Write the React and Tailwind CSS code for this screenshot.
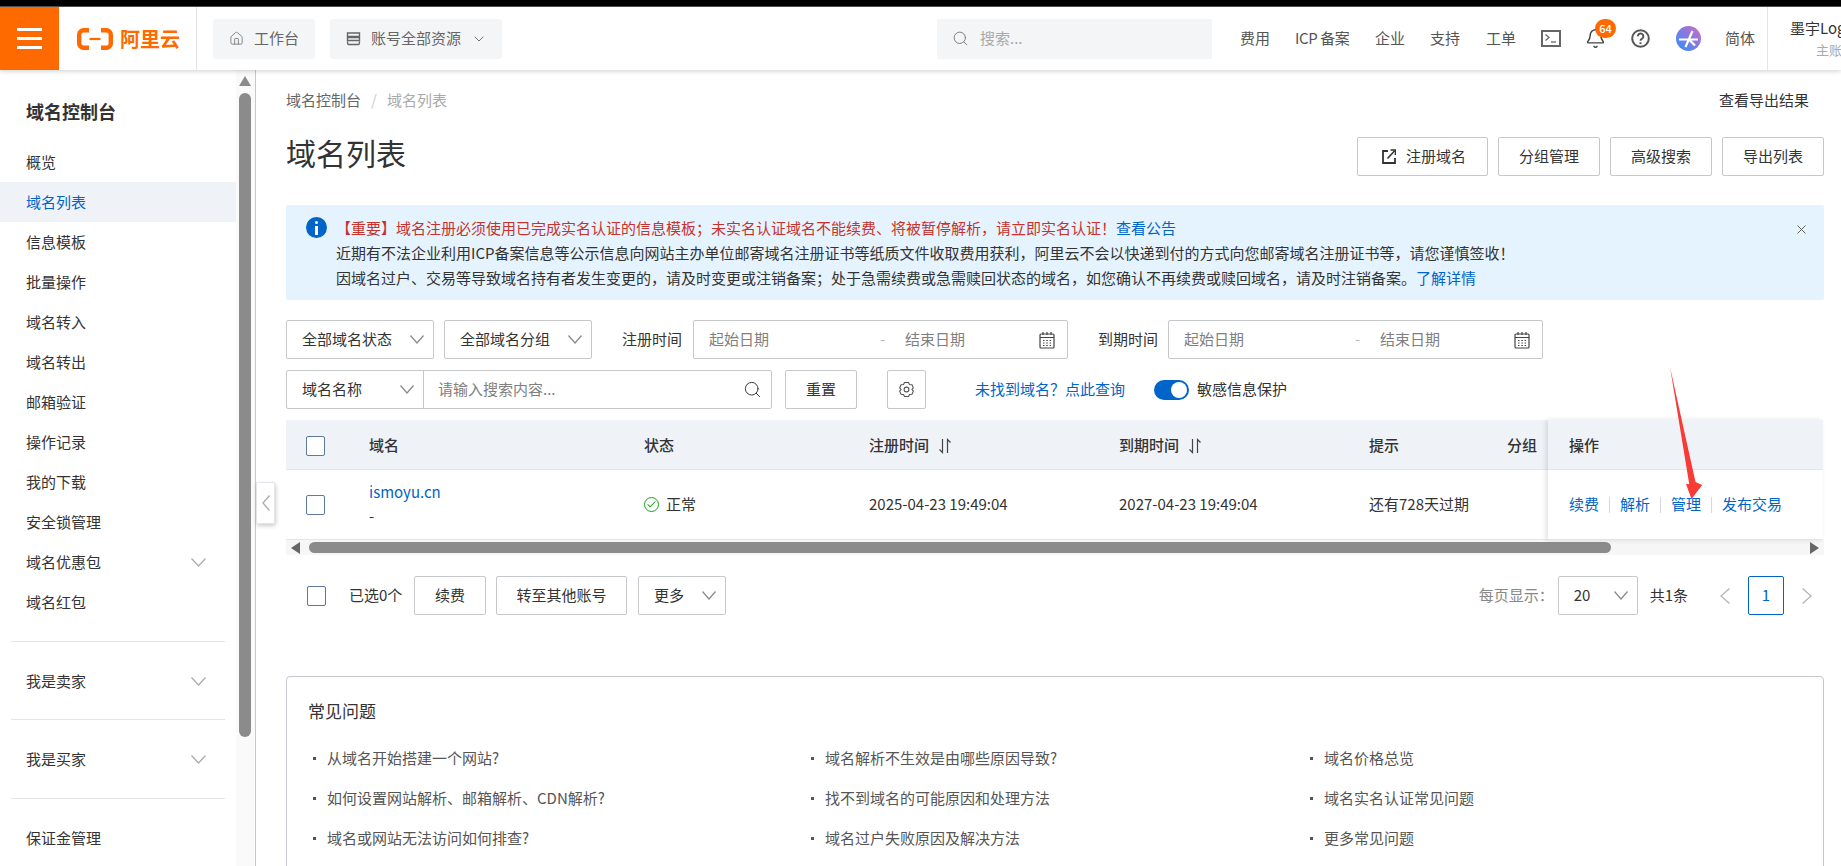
import React from "react";
import { ChevronDown, Home, Search, X, Bell, Check } from "lucide-react";

const V = ({ w = 14, h = 9, color = "#888", className = "" }) => (
  <svg width={w} height={h} viewBox={`0 0 ${w} ${h}`} fill="none" stroke={color} strokeWidth="1.2" className={"shrink-0 " + className}>
    <path d={`M0.5 0.5L${w / 2} ${h - 1}L${w - 0.5} 0.5`} />
  </svg>
);

const Arrow = ({ dir = "left", color = "#b5b5b5", w = 10, h = 16, className = "" }) => (
  <svg width={w} height={h} viewBox={`0 0 ${w} ${h}`} fill="none" stroke={color} strokeWidth="1.3" className={"shrink-0 " + className}>
    <path d={dir === "left" ? `M${w - 0.5} 0.5L1 ${h / 2}L${w - 0.5} ${h - 0.5}` : `M0.5 0.5L${w - 1} ${h / 2}L0.5 ${h - 0.5}`} />
  </svg>
);

function Sel({ w, label }) {
  return (
    <div className={`${w} h-[39px] border border-[#c6c8cc] rounded-[2px] flex items-center justify-between pl-[15px] pr-[9px] text-[15px] text-[#333] bg-white`}>
      <span>{label}</span>
      <V />
    </div>
  );
}

function Btn({ w, children, className = "" }) {
  return (
    <div className={`${w} h-[39px] border border-[#c6c8cc] rounded-[2px] flex items-center justify-center text-[15px] text-[#333] bg-white ${className}`}>
      {children}
    </div>
  );
}

const Cal = () => (
  <svg width="16" height="18" viewBox="0 0 16 18" fill="none" stroke="#444" strokeWidth="1.2">
    <rect x="1" y="3" width="14" height="14" rx="1" />
    <path d="M4 1v3M8 1v3M12 1v3M1 6.5h14" />
    <path d="M4 9.500h1.500M7.300 9.500h1.500M10.600 9.500h1.500M4 12h1.500M7.300 12h1.500M10.600 12h1.500M4 14.500h1.500M7.300 14.500h1.500M10.600 14.500h1.500" />
  </svg>
);

function DateRange() {
  return (
    <div className="w-[375px] h-[39px] border border-[#c6c8cc] rounded-[2px] flex items-center pl-[15px] pr-[12px] text-[15px] text-[#808080]">
      <span className="w-[171px]">起始日期</span>
      <span className="w-[25px] text-[#bbb]">-</span>
      <span>结束日期</span>
      <span className="ml-auto flex"><Cal /></span>
    </div>
  );
}

const Box = ({ className = "" }) => <div className={`w-[19px] h-[20px] border border-[#5d7a9c] rounded-[2px] bg-white shrink-0 ${className}`} />;

const SortIcon = () => (
  <svg width="14" height="18" viewBox="0 0 14 18" fill="none" stroke="#444" strokeWidth="1.2" className="ml-[9px]">
    <path d="M4.500 2v13.500L1.500 12.500M9.500 16V2.500l3 3" />
  </svg>
);

function SideItem({ children, active, arrow }) {
  return (
    <div className={`h-[40px] flex items-center pl-[26px] pr-[30px] justify-between text-[15px] ${active ? "bg-[#eff3f8] text-[#0064c8]" : "text-[#333]"}`}>
      <span>{children}</span>
      {arrow && <V w={15} h={9} color="#aaa" />}
    </div>
  );
}

const SideRule = ({ className = "" }) => <div className={`mx-[11px] h-px bg-[#e3e5e8] ${className}`} />;

function Faq({ children }) {
  return (
    <div className="h-[40px] flex items-center text-[15px] text-[#555]">
      <span className="w-[3px] h-[3px] ml-[26px] mr-[11px] bg-[#555] shrink-0" />
      {children}
    </div>
  );
}

const items2 = ["信息模板", "批量操作", "域名转入", "域名转出", "邮箱验证", "操作记录", "我的下载", "安全锁管理"];

export default function App() {
  return (
    <div className="w-[1841px] h-[866px] overflow-hidden flex flex-col bg-white relative" style={{ fontFamily: '"Noto Sans CJK SC", "Noto Sans", sans-serif' }}>
      <div className="h-[6px] bg-black shrink-0" />
      <div className="h-px bg-[#555] shrink-0" />
      <header className="h-[63px] shrink-0 flex items-center bg-white shadow-[0_1px_5px_rgba(0,0,0,0.2)] relative z-10 text-[15px] text-[#555] whitespace-nowrap">
        <div className="w-[59px] h-full bg-[#ff6a00] flex flex-col items-center justify-center gap-[6px] shrink-0">
          <span className="w-[25px] h-[3px] bg-white" />
          <span className="w-[25px] h-[3px] bg-white" />
          <span className="w-[25px] h-[3px] bg-white" />
        </div>
        <div className="w-[138px] h-full border-r border-[#e3e5e8] flex items-center pl-[18px] shrink-0">
          <svg width="36" height="22" viewBox="0 0 36 22" fill="none" stroke="#ff6a00" strokeWidth="4.400">
            <path d="M12 2.200H6.500a4.300 4.300 0 0 0-4.300 4.300v9a4.300 4.300 0 0 0 4.300 4.300H12" />
            <path d="M24 2.200h5.500a4.300 4.300 0 0 1 4.300 4.300v9a4.300 4.300 0 0 1-4.300 4.300H24" />
            <path d="M12.500 11h11" strokeWidth="2.200" />
          </svg>
          <span className="ml-[7px] text-[20px] leading-none font-bold text-[#ff6a00]">阿里云</span>
        </div>
        <div className="ml-[16px] w-[102px] h-[40px] rounded-[3px] bg-[#f4f5f7] flex items-center pl-[16px] shrink-0">
          <Home size={15} strokeWidth={1.2} className="text-[#666]" />
          <span className="ml-[10px] text-[#666]">工作台</span>
        </div>
        <div className="ml-[15px] w-[172px] h-[40px] rounded-[3px] bg-[#f4f5f7] flex items-center pl-[16px] shrink-0">
          <svg width="15" height="15" viewBox="0 0 15 15" fill="none" stroke="#666" strokeWidth="1.400">
            <path d="M1.500 2h12v3.500h-12zM1.500 6.500h12v3h-12zM1.500 10.500c0 2 0 3 1 3h10c1 0 1-1 1-3" />
          </svg>
          <span className="ml-[10px] text-[#666]">账号全部资源</span>
          <ChevronDown size={16} strokeWidth={1.4} className="ml-[10px] text-[#666]" />
        </div>
        <div className="ml-[435px] w-[275px] h-[40px] rounded-[2px] bg-[#f4f5f7] flex items-center pl-[15px] shrink-0 text-[#aaa]">
          <Search size={17} strokeWidth={1.3} className="text-[#777]" />
          <span className="ml-[11px]">搜索...</span>
        </div>
        <span className="ml-[28px] shrink-0">费用</span>
        <span className="ml-[25px] w-[56px] shrink-0 whitespace-nowrap tracking-[-0.4px]">ICP 备案</span>
        <span className="ml-[24px] shrink-0">企业</span>
        <span className="ml-[25px] shrink-0">支持</span>
        <span className="ml-[26px] shrink-0">工单</span>
        <svg className="ml-[25px] shrink-0" width="20" height="17" viewBox="0 0 20 17" fill="none" stroke="#666" strokeWidth="2">
          <rect x="1" y="1" width="18" height="15" />
          <path d="M4.500 4.500l3.500 3-3.500 3" strokeWidth="1.300" />
          <path d="M10 12h5" strokeWidth="1.300" />
        </svg>
        <div className="ml-[26px] relative w-[16px] h-[20px] flex items-center justify-center shrink-0">
          <Bell size={21} strokeWidth={1.7} className="text-[#444] shrink-0" />
          <span className="absolute left-[8px] top-[-10px] w-[21px] h-[19px] rounded-full bg-[#ff6a00] text-white text-[11px] font-medium flex items-center justify-center">64</span>
        </div>
        <svg className="ml-[28px] shrink-0" width="19" height="19" viewBox="0 0 19 19" fill="none" stroke="#555" strokeWidth="2">
          <circle cx="9.500" cy="9.500" r="8.300" />
          <path d="M6.800 7.300a2.800 2.800 0 1 1 4.300 2.300c-1 .7-1.600 1-1.600 2.200" />
          <path d="M9.500 13.300v1.800" />
        </svg>
        <svg className="ml-[26px] shrink-0" width="25" height="25" viewBox="0 0 25 25">
          <defs>
            <linearGradient id="av" x1="0.100" y1="0.900" x2="0.900" y2="0.100">
              <stop offset="0" stopColor="#3b8cf8" />
              <stop offset="1" stopColor="#c26dc9" />
            </linearGradient>
          </defs>
          <circle cx="12.500" cy="12.500" r="12.500" fill="url(#av)" />
          <path d="M3 13.500h19M16.500 5L9.500 21M13 13.500l6 6" stroke="#fff" strokeWidth="2.200" fill="none" />
        </svg>
        <span className="ml-[24px] shrink-0">简体</span>
        <div className="ml-[12px] w-px h-full bg-[#e3e5e8] shrink-0" />
        <div className="ml-[22px] flex flex-col items-start shrink-0">
          <span className="text-[#333] leading-[22px]">墨宇Logan</span>
          <span className="text-[13px] text-[#aaa] ml-[26px] leading-[22px]">主账号</span>
        </div>
      </header>

      <div className="flex-1 flex min-h-0 relative">
        <aside className="w-[255px] shrink-0 flex border-r border-[#c6c8cc] relative box-content">
          <div className="w-[236px] shrink-0">
            <div className="h-[72px] pl-[26px] pt-[27px] text-[18px] leading-[28px] font-bold text-[#333]">域名控制台</div>
            <SideItem>概览</SideItem>
            <SideItem active>域名列表</SideItem>
            {items2.map((t) => <SideItem key={t}>{t}</SideItem>)}
            <SideItem arrow>域名优惠包</SideItem>
            <SideItem>域名红包</SideItem>
            <SideRule className="mt-[19px]" />
            <div className="mt-[19px]"><SideItem arrow>我是卖家</SideItem></div>
            <SideRule className="mt-[18px]" />
            <div className="mt-[19px]"><SideItem arrow>我是买家</SideItem></div>
            <SideRule className="mt-[19px]" />
            <div className="mt-[19px]"><SideItem>保证金管理</SideItem></div>
          </div>
          <div className="w-[19px] bg-[#fafafa] flex flex-col items-center pr-[2px]">
            <div className="mt-[6px] w-0 h-0 border-l-[6px] border-r-[6px] border-b-[10px] border-l-transparent border-r-transparent border-b-[#8b8b8b]" />
            <div className="mt-[7px] w-[12px] h-[644px] rounded-[6px] bg-[#8b8b8b]" />
          </div>
        </aside>

        <main className="flex-1 min-w-0 pl-[30px] pr-[17px] relative">
          <div className="absolute left-0 top-[412px] w-[19px] h-[42px] bg-white border border-[#e3e5e8] rounded-r-[2px] shadow-[1px_2px_4px_rgba(0,0,0,0.2)] flex items-center justify-center">
            <Arrow w={8} h={16} color="#aaa" />
          </div>

          <div className="mt-[20px] h-[20px] flex items-center justify-between text-[15px]">
            <div className="flex items-center">
              <span className="text-[#666]">域名控制台</span>
              <span className="mx-[10px] text-[#ccc]">/</span>
              <span className="text-[#aaa]">域名列表</span>
            </div>
            <span className="text-[#333] mr-[15px]">查看导出结果</span>
          </div>

          <div className="mt-[27px] flex justify-between items-start">
            <h1 className="text-[30px] leading-[30px] text-[#333] font-normal">域名列表</h1>
            <div className="flex gap-[10px]">
              <Btn w="w-[131px]">
                <svg width="14" height="15" viewBox="0 0 14 15" fill="none" stroke="#333" strokeWidth="1.800" className="mr-[10px] ml-[3px]">
                  <path d="M6 2H1v12h12V9" />
                  <path d="M5.500 9.500L12.500 2M8.500 1h5v5" strokeWidth="1.600" />
                </svg>
                注册域名
              </Btn>
              <Btn w="w-[102px]">分组管理</Btn>
              <Btn w="w-[102px]">高级搜索</Btn>
              <Btn w="w-[102px]">导出列表</Btn>
            </div>
          </div>

          <div className="mt-[29px] h-[95px] bg-[#e5f3ff] rounded-[2px] flex pl-[20px] pr-[15px] pt-[10px] text-[15px] leading-[25px] text-[#333]">
            <div className="w-[21px] h-[21px] mt-[2px] rounded-full bg-[#0064c8] flex flex-col items-center justify-center gap-[2px] shrink-0">
              <span className="w-[3px] h-[3px] bg-white rounded-full" />
              <span className="w-[3px] h-[9px] bg-white" />
            </div>
            <div className="ml-[9px] flex-1 whitespace-nowrap">
              <div><span className="text-[#c7322c]">【重要】域名注册必须使用已完成实名认证的信息模板；未实名认证域名不能续费、将被暂停解析，请立即实名认证！</span><span className="text-[#0064c8]">查看公告</span></div>
              <div>近期有不法企业利用ICP备案信息等公示信息向网站主办单位邮寄域名注册证书等纸质文件收取费用获利，阿里云不会以快递到付的方式向您邮寄域名注册证书等，请您谨慎签收！</div>
              <div>因域名过户、交易等导致域名持有者发生变更的，请及时变更或注销备案；处于急需续费或急需赎回状态的域名，如您确认不再续费或赎回域名，请及时注销备案。<span className="text-[#0064c8]">了解详情</span></div>
            </div>
            <X size={15} strokeWidth={1.5} className="text-[#555] mt-[7px] shrink-0" />
          </div>

          <div className="mt-[20px] flex items-center">
            <Sel w="w-[148px]" label="全部域名状态" />
            <div className="ml-[10px]"><Sel w="w-[148px]" label="全部域名分组" /></div>
            <span className="ml-[30px] mr-[10px] text-[15px] text-[#333] w-[61px]">注册时间</span>
            <DateRange />
            <span className="ml-[30px] mr-[10px] text-[15px] text-[#333] w-[60px]">到期时间</span>
            <DateRange />
          </div>

          <div className="mt-[11px] flex items-center">
            <div className="w-[486px] h-[39px] border border-[#c6c8cc] rounded-[2px] flex items-center text-[15px]">
              <div className="w-[137px] h-full border-r border-[#c6c8cc] flex items-center justify-between pl-[15px] pr-[9px] text-[#333]">
                <span>域名名称</span>
                <V />
              </div>
              <span className="ml-[14px] text-[#808080]">请输入搜索内容...</span>
              <Search size={19} strokeWidth={1.2} className="ml-auto mr-[9px] text-[#333]" />
            </div>
            <Btn w="ml-[13px] w-[72px]">重置</Btn>
            <Btn w="ml-[30px] w-[39px]">
              <svg width="15" height="17" viewBox="0 0 15 17" fill="none" stroke="#555" strokeWidth="1.100">
                <path d="M5.500 1.500h4l1 2 2.500.300 1.300 3L13 8.500l1.300 1.700-1.300 3-2.500.300-1 2h-4l-1-2-2.500-.300-1.300-3L2 8.500.700 6.800 2 3.800l2.500-.300z" />
                <circle cx="7.500" cy="8.500" r="2.400" />
              </svg>
            </Btn>
            <span className="ml-[49px] text-[15px] text-[#0064c8]">未找到域名？点此查询</span>
            <div className="ml-[29px] w-[35px] h-[20px] rounded-full bg-[#0064c8] flex items-center justify-end pr-[2px]">
              <span className="w-[16px] h-[16px] rounded-full bg-white" />
            </div>
            <span className="ml-[8px] text-[15px] text-[#333]">敏感信息保护</span>
          </div>

          <div className="mt-[11px] flex relative text-[15px] text-[#333]">
            <div className="flex-1 min-w-0 overflow-hidden">
              <div className="h-[50px] pt-[2px] bg-[#eff2f7] border-b border-[#e3e5e8] flex items-center font-medium text-[#333]">
                <div className="w-[83px] pl-[20px]"><Box /></div>
                <div className="w-[275px]">域名</div>
                <div className="w-[225px]">状态</div>
                <div className="w-[250px] flex items-center">注册时间<SortIcon /></div>
                <div className="w-[250px] flex items-center">到期时间<SortIcon /></div>
                <div className="w-[138px]">提示</div>
                <div className="w-[40px] whitespace-nowrap">分组</div>
              </div>
              <div className="h-[70px] border-b border-[#e3e5e8] flex items-center">
                <div className="w-[83px] pl-[20px]"><Box /></div>
                <div className="w-[275px] flex flex-col">
                  <span className="text-[#0064c8] leading-[24px] -mt-[1px]">ismoyu.cn</span>
                  <span className="leading-[24px]">-</span>
                </div>
                <div className="w-[225px] flex items-center">
                  <span className="w-[15px] h-[15px] rounded-full border-[1.5px] border-[#17a317] flex items-center justify-center mr-[7px]">
                    <Check size={11} strokeWidth={2.2} className="text-[#17a317]" />
                  </span>
                  正常
                </div>
                <div className="w-[250px]">2025-04-23 19:49:04</div>
                <div className="w-[250px]">2027-04-23 19:49:04</div>
                <div className="w-[138px] whitespace-nowrap">还有728天过期</div>
              </div>
            </div>
            <div className="w-[275px] mr-[1px] shrink-0 bg-white shadow-[-2px_0_5px_rgba(0,0,0,0.12)] relative">
              <div className="h-[50px] pt-[2px] bg-[#eff2f7] border-b border-[#e3e5e8] flex items-center pl-[21px] font-medium">操作</div>
              <div className="h-[70px] flex items-center pl-[21px] text-[#0064c8] border-b border-[#e3e5e8]">
                <span>续费</span>
                <span className="w-px h-[16px] bg-[#d5d7da] mx-[10px]" />
                <span>解析</span>
                <span className="w-px h-[16px] bg-[#d5d7da] mx-[10px]" />
                <span>管理</span>
                <span className="w-px h-[16px] bg-[#d5d7da] mx-[10px]" />
                <span>发布交易</span>
              </div>
            </div>
          </div>

          <div className="h-[15px] bg-[#f6f6f6] flex items-center">
            <div className="ml-[5px] w-0 h-0 border-y-[6px] border-r-[9px] border-y-transparent border-r-[#666]" />
            <div className="ml-[9px] w-[1302px] h-[11px] rounded-[6px] bg-[#8b8b8b]" />
            <div className="ml-auto mr-[5px] w-0 h-0 border-y-[6px] border-l-[9px] border-y-transparent border-l-[#666]" />
          </div>

          <div className="mt-[21px] flex items-center text-[15px] text-[#333]">
            <Box className="ml-[21px]" />
            <span className="ml-[23px] w-[65px]">已选0个</span>
            <Btn w="w-[72px]">续费</Btn>
            <Btn w="ml-[10px] w-[131px]">转至其他账号</Btn>
            <div className="ml-[11px]"><Sel w="w-[88px]" label="更多" /></div>
            <span className="ml-auto text-[#888]">每页显示：</span>
            <div className="ml-[4px]"><Sel w="w-[80px]" label="20" /></div>
            <span className="ml-[12px]">共1条</span>
            <Arrow dir="left" className="ml-[32px]" />
            <div className="ml-[18px] w-[36px] h-[39px] border border-[#0064c8] rounded-[2px] flex items-center justify-center text-[#0064c8]">1</div>
            <Arrow dir="right" className="ml-[18px] mr-[12px]" />
          </div>

          <div className="mt-[61px] h-[240px] border border-[#c6c8d0] rounded-[4px] pt-[22px] pl-[21px] text-[#333]">
            <div className="text-[17px] leading-[24px] font-normal">常见问题</div>
            <div className="-ml-[21px] mt-[9px] grid grid-cols-[498px_499px_1fr] pt-[6px]">
              <Faq>从域名开始搭建一个网站?</Faq>
              <Faq>域名解析不生效是由哪些原因导致?</Faq>
              <Faq>域名价格总览</Faq>
              <Faq>如何设置网站解析、邮箱解析、CDN解析?</Faq>
              <Faq>找不到域名的可能原因和处理方法</Faq>
              <Faq>域名实名认证常见问题</Faq>
              <Faq>域名或网站无法访问如何排查?</Faq>
              <Faq>域名过户失败原因及解决方法</Faq>
              <Faq>更多常见问题</Faq>
            </div>
          </div>
        </main>
      </div>

      <svg className="absolute left-[1660px] top-[360px] pointer-events-none z-20" width="50" height="145" viewBox="0 0 50 145" fill="#fa3a35">
        <path d="M10 7 L31.500 138 L42 125 L35.500 122 Z" />
        <path d="M26 124 L42 125 L31.500 139 Z" />
      </svg>
    </div>
  );
}
